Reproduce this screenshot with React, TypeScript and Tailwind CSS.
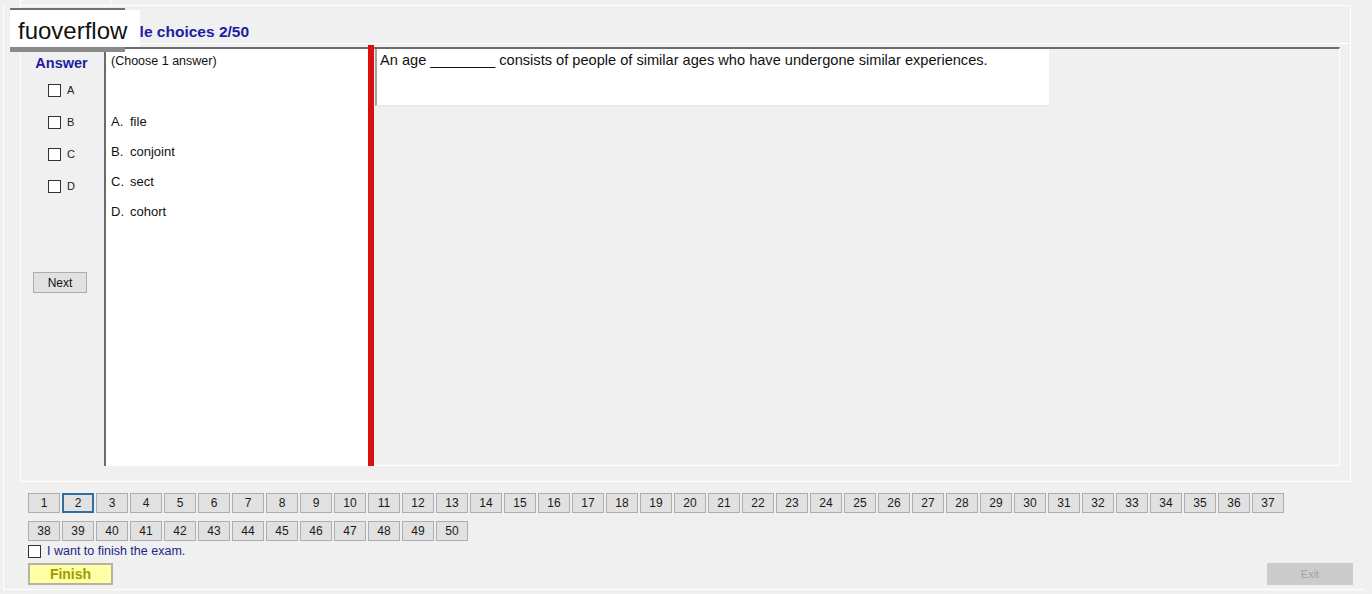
const row1 = Array.from({ length: 37 }, (_, i) => i + 1);
const row2 = Array.from({ length: 13 }, (_, i) => i + 38);
const letters = ["A", "B", "C", "D"];
const choices = [
  { key: "A.", text: "file" },
  { key: "B.", text: "conjoint" },
  { key: "C.", text: "sect" },
  { key: "D.", text: "cohort" },
];

function NumButton({ n }: { n: number }) {
  const active = n === 2;
  return (
    <div
      className={[
        "flex h-[20px] w-[32px] items-center justify-center bg-[#e1e1e1] text-[12px] text-[#1a1a1a]",
        active ? "border-2 border-[#2f6ea3]" : "border border-[#adadad]",
      ].join(" ")}
    >
      {n}
    </div>
  );
}

function Box() {
  return <div className="h-[13px] w-[13px] shrink-0 border border-[#333] bg-white" />;
}

export default function App() {
  return (
    <div className="relative h-[594px] w-[1372px] overflow-hidden bg-[#f0f0f0] font-['Liberation_Sans',Arial,sans-serif] text-black">
      {/* tab stub at the top */}
      <div className="ml-[20px] h-[5px] w-[91px] border-x border-white" />

      <div className="ml-[3px] h-[585px] w-[1361px] border-b border-l border-white">
        {/* main panel */}
        <div className="ml-[16px] flex h-[477px] w-[1331px] flex-col border border-white">
          <div className="h-[38px] border-b border-white pl-[73px] pt-[17px] text-[15.5px] font-bold leading-[17px] text-[#1d1da3]">
            Multiple choices 2/50
          </div>

          <div className="mt-[1px] flex h-[421px] pl-[1px] pr-[10px]">
            {/* answer column */}
            <div className="flex w-[82px] shrink-0 flex-col">
              <div className="pr-[3px] pt-[10px] text-center text-[14.5px] font-bold leading-[16px] text-[#1d1da3]">
                Answer
              </div>
              <div className="mt-[13px] flex flex-col pl-[26px]">
                {letters.map((l) => (
                  <div key={l} className="flex h-[32px] items-start gap-[6px]">
                    <Box />
                    <span className="text-[11px] leading-[13px] text-[#222]">{l}</span>
                  </div>
                ))}
              </div>
              <div className="ml-[11px] mt-[60px] flex h-[21px] w-[54px] items-center justify-center border border-[#adadad] bg-[#e1e1e1] text-[12px] text-[#111]">
                Next
              </div>
            </div>

            {/* choices panel */}
            <div className="mt-[2px] w-[264px] shrink-0 border-l-2 border-t-2 border-[#6b6b6b] bg-white">
              <div className="pl-[5px] pt-[5px] text-[12.5px] leading-[14px] text-[#111]">
                (Choose 1 answer)
              </div>
              <div className="mt-[39px] flex flex-col pl-[5px]">
                {choices.map((c) => (
                  <div key={c.key} className="flex h-[30px] items-center text-[13px] text-[#111]">
                    <span className="w-[19px]">{c.key}</span>
                    <span>{c.text}</span>
                  </div>
                ))}
              </div>
            </div>

            <div className="w-[6px] shrink-0 bg-[#dc0f0f]" />

            {/* question area */}
            <div className="mt-[2px] flex-1 border-r border-b border-t-2 border-r-white border-b-white border-t-[#6b6b6b]">
              <div className="ml-[1px] h-[57px] w-[674px] border-b border-l-2 border-b-[#e6e6e6] border-l-[#a3a3a3] bg-white pl-[3px] pt-[3px] text-[14.6px] leading-[16px] text-[#111]">
                An age ________ consists of people of similar ages who have undergone similar experiences.
              </div>
            </div>
          </div>
        </div>

        {/* question navigator */}
        <div className="mt-[11px] flex flex-col gap-[8px] pl-[24px]">
          <div className="flex gap-[2px]">
            {row1.map((n) => (
              <NumButton key={n} n={n} />
            ))}
          </div>
          <div className="flex gap-[2px]">
            {row2.map((n) => (
              <NumButton key={n} n={n} />
            ))}
          </div>
        </div>

        <div className="mt-[3px] flex h-[14px] items-center gap-[6px] pl-[24px]">
          <Box />
          <span className="text-[12.5px] text-[#22228a]">I want to finish the exam.</span>
        </div>

        <div className="mt-[5px] flex items-center justify-between pl-[24px] pr-[11px]">
          <div className="flex h-[22px] w-[85px] items-center justify-center border-2 border-[#b4b4a0] bg-[#ffffa6] text-[14px] font-bold text-[#9c9c00]">
            Finish
          </div>
          <div className="flex h-[22px] w-[86px] items-center justify-center bg-[#cccccc] text-[11px] text-[#a4a4a4]">
            Exit
          </div>
        </div>
      </div>

      {/* watermark */}
      <div className="absolute left-[10px] top-[8px] flex flex-col">
        <div className="h-[2px] w-[115px] bg-[#707070]" />
        <div className="flex h-[37px] w-[130px] items-center bg-white pl-[8px] pt-[5px] text-[24px] leading-none text-[#111]">
          fuoverflow
        </div>
        <div className="h-[5px] w-[115px] bg-[#8a8a8a]" />
      </div>
    </div>
  );
}
